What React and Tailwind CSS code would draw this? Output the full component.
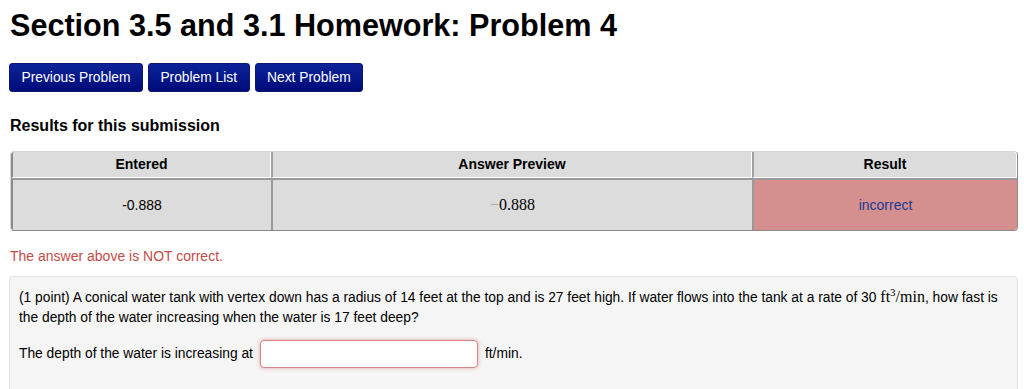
import React from "react";

function NavButton({ children }) {
  return (
    <button className="h-[29px] px-[11.5px] rounded-[3px] border border-[#0b1a6e] bg-gradient-to-b from-[#0d2299] to-[#000a7a] text-white text-[13.8px] leading-none">
      {children}
    </button>
  );
}

function HeadCell({ children, className }) {
  return (
    <th
      className={`h-[26px] font-bold text-[14px] text-black bg-[#dcdcdc] border-l-2 border-t-0 border-[#a0a0a0] border-r border-r-white border-b border-b-white ${className || ""}`}
    >
      {children}
    </th>
  );
}

function BodyCell({ children, className }) {
  return (
    <td
      className={`h-[52px] text-center text-[14px] border-l-2 border-t-2 border-[#9a9a9a] ${className || ""}`}
    >
      {children}
    </td>
  );
}

const serif = { fontFamily: '"Liberation Serif", "Times New Roman", serif' };

export default function App() {
  return (
    <div
      className="bg-white w-[1024px] h-[389px] overflow-hidden px-[10px] text-black"
      style={{ fontFamily: '"Liberation Sans", Arial, sans-serif' }}
    >
      <h1 className="pt-[5px] text-[30.6px] font-bold leading-[40px]">
        Section 3.5 and 3.1 Homework: Problem 4
      </h1>
      <div className="mt-[18px] flex gap-[5px] -ml-[1px]">
        <NavButton>Previous Problem</NavButton>
        <NavButton>Problem List</NavButton>
        <NavButton>Next Problem</NavButton>
      </div>
      <h2 className="mt-[24px] text-[16px] font-bold leading-[20px]">
        Results for this submission
      </h2>
      <table className="mt-[15px] w-[1008px] table-fixed border-separate border-spacing-0 rounded-[4px] border border-[#d6d6d6] border-r-[#8a8a8a] border-b-[#8a8a8a] overflow-hidden">
        <thead>
          <tr>
            <HeadCell className="w-[260px] rounded-tl-[3px] border-l-[#8a8a8a]">Entered</HeadCell>
            <HeadCell className="w-[481px]">Answer Preview</HeadCell>
            <HeadCell className="rounded-tr-[3px]">Result</HeadCell>
          </tr>
        </thead>
        <tbody>
          <tr>
            <BodyCell className="bg-[#dcdcdc] border-l-[#8a8a8a]">-0.888</BodyCell>
            <BodyCell className="bg-[#dcdcdc]">
              <span style={serif} className="text-[16px]">
                <span className="text-[#a8a8a8]">−</span>0.888
              </span>
            </BodyCell>
            <BodyCell className="bg-[#d58f8f] text-[#1c3a94]">incorrect</BodyCell>
          </tr>
        </tbody>
      </table>
      <p className="mt-[15px] text-[14px] text-[#c44b48] leading-[20px]">
        The answer above is NOT correct.
      </p>
      <div className="mt-[10px] -ml-[1px] w-[1009px] h-[120px] bg-[#f5f5f5] border border-[#e3e3e3] rounded-[4px] px-[9px] pt-[10px] text-[13.8px] leading-[20px] text-black">
        <p>
          (1 point) A conical water tank with vertex down has a radius of 14 feet at the top and is 27 feet high. If water flows into the tank at a rate of 30{" "}
          <span style={serif} className="text-[16px]">
            ft<span className="relative -top-[6px] text-[11px]">3</span>/min
          </span>
          , how fast is the depth of the water increasing when the water is 17 feet deep?
        </p>
        <div className="mt-[12px] flex items-center">
          <span>The depth of the water is increasing at</span>
          <input
            type="text"
            className="ml-[7px] w-[218px] h-[28px] bg-white rounded-[4px] border border-[#d58585] shadow-[0_0_4px_rgba(200,80,80,0.45)] outline-none"
          />
          <span className="ml-[7px]">ft/min.</span>
        </div>
      </div>
    </div>
  );
}
